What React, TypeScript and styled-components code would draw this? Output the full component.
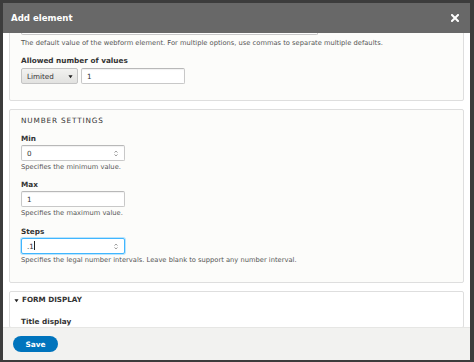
import React from "react";
import styled, { createGlobalStyle } from "styled-components";

const GlobalStyle = createGlobalStyle`
  html, body { margin: 0; padding: 0; }
  body {
    width: 474px;
    height: 362px;
    overflow: hidden;
    background: #3a3a3a;
    font-family: "DejaVu Sans", "Liberation Sans", sans-serif;
    color: #333;
  }
  * { box-sizing: border-box; }
`;

const Page = styled.div`
  width: 474px;
  height: 362px;
  display: flex;
  flex-direction: column;
  padding: 3px 4px 2px 3px;
  background: #3c3c3c;
`;

const Dialog = styled.div`
  flex: 1;
  min-height: 0;
  display: flex;
  flex-direction: column;
  background: #fff;
  overflow: hidden;
`;

const TitleBar = styled.div`
  flex: none;
  height: 30px;
  background: #686868;
  display: flex;
  align-items: center;
  justify-content: space-between;
  padding: 0 11px 0 8px;
  color: #fff;
  font-weight: bold;
  font-size: 8.6px;
`;

const Body = styled.div`
  flex: 1;
  min-height: 0;
  overflow: hidden;
  padding: 0 6px;
`;

const Scroller = styled.div`
  margin-top: -22px;
  display: flex;
  flex-direction: column;
  gap: 8px;
`;

const Fieldset = styled.div<{ $plain?: boolean }>`
  border: 1px solid #dedede;
  border-radius: 2px;
  background: ${(p) => (p.$plain ? "#ffffff" : "#fcfcfa")};
  padding: ${(p) => (p.$plain ? "3px 11px 0 4px" : "6px 11px 16px 11px")};
  display: flex;
  flex-direction: column;
  align-items: flex-start;
`;

const Legend = styled.div`
  font-size: 7.3px;
  line-height: 10px;
  letter-spacing: 0.85px;
  text-transform: uppercase;
  color: #333;
`;

const Summary = styled.div`
  display: flex;
  align-items: center;
  gap: 3px;
  font-size: 7.2px;
  line-height: 10px;
  font-weight: bold;
  text-transform: uppercase;
  color: #333;
`;

const Label = styled.div<{ $gap?: number }>`
  margin-top: ${(p) => p.$gap ?? 8}px;
  font-size: 7.3px;
  line-height: 10px;
  font-weight: bold;
  color: #333;
`;

const Desc = styled.div<{ $gap?: number }>`
  margin-top: ${(p) => p.$gap ?? 1}px;
  font-size: 6.72px;
  line-height: 11px;
  color: #555;
  white-space: nowrap;
`;

const TextInput = styled.div<{ $w: number; $focus?: boolean }>`
  margin-top: 1px;
  width: ${(p) => p.$w}px;
  height: 16px;
  border: 1px solid ${(p) => (p.$focus ? "#40b6ff" : "#c8c8c8")};
  border-top-color: ${(p) => (p.$focus ? "#40b6ff" : "#b8b8b8")};
  border-radius: 2px;
  background: #fff;
  box-shadow: ${(p) =>
    p.$focus ? "0 0 0 1px rgba(64,182,255,0.35)" : "inset 0 1px 1px rgba(0,0,0,0.06)"};
  display: flex;
  align-items: center;
  justify-content: space-between;
  padding: 0 6px 0 5px;
  font-size: 7.2px;
  color: #333;
`;

const TopInput = styled(TextInput)`
  margin-top: 0;
  height: 17px;
`;

const Row = styled.div`
  margin-top: 2px;
  display: flex;
  gap: 3px;
`;

const Select = styled.div`
  width: 57px;
  height: 16px;
  border: 1px solid #c4c4c4;
  border-radius: 2px;
  background: linear-gradient(#f2f2f0, #e2e2e0);
  display: flex;
  align-items: center;
  justify-content: space-between;
  padding: 0 4px 0 5px;
  font-size: 7.2px;
  color: #333;
`;

const Caret = styled.span`
  display: inline-block;
  width: 0.6px;
  height: 9px;
  background: #222;
  margin-left: 0.5px;
  vertical-align: -1.5px;
`;

const Footer = styled.div`
  flex: none;
  height: 33px;
  background: #f2f2f0;
  border-top: 1px solid #e6e6e4;
  display: flex;
  align-items: center;
  padding: 0 10px;
`;

const SaveButton = styled.button`
  width: 45px;
  height: 16px;
  border: none;
  border-radius: 9px;
  background: #0074bd;
  color: #fff;
  font-family: "DejaVu Sans", sans-serif;
  font-weight: bold;
  font-size: 7.4px;
  padding: 0;
  display: flex;
  align-items: center;
  justify-content: center;
`;

const Spinner = () => (
  <svg width="4" height="7" viewBox="0 0 4 7">
    <path d="M0.5 2.6 L2 1 L3.5 2.6" fill="none" stroke="#888" strokeWidth="0.8" />
    <path d="M0.5 4.4 L2 6 L3.5 4.4" fill="none" stroke="#888" strokeWidth="0.8" />
  </svg>
);

const DownTriangle = ({ size = 6 }: { size?: number }) => (
  <svg width={size} height={size} viewBox="0 0 6 6">
    <path d="M0.5 1.5 L5.5 1.5 L3 5 Z" fill="#222" />
  </svg>
);

const CloseIcon = () => (
  <svg width="8" height="8" viewBox="0 0 8 8">
    <path d="M1 1 L7 7 M7 1 L1 7" stroke="#fff" strokeWidth="2" strokeLinecap="square" />
  </svg>
);

export default function App() {
  return (
    <>
      <GlobalStyle />
      <Page>
        <Dialog>
          <TitleBar>
            <span>Add element</span>
            <CloseIcon />
          </TitleBar>
          <Body>
            <Scroller>
              <Fieldset>
                <TopInput $w={297} />
                <Desc $gap={3}>
                  The default value of the webform element. For multiple options, use commas to
                  separate multiple defaults.
                </Desc>
                <Label $gap={7}>Allowed number of values</Label>
                <Row>
                  <Select>
                    <span>Limited</span>
                    <DownTriangle size={5} />
                  </Select>
                  <TextInput $w={104} style={{ marginTop: 0 }}>
                    <span>1</span>
                  </TextInput>
                </Row>
              </Fieldset>

              <Fieldset>
                <Legend>Number settings</Legend>
                <Label>Min</Label>
                <TextInput $w={104}>
                  <span>0</span>
                  <Spinner />
                </TextInput>
                <Desc>Specifies the minimum value.</Desc>
                <Label $gap={7}>Max</Label>
                <TextInput $w={104}>
                  <span>1</span>
                </TextInput>
                <Desc>Specifies the maximum value.</Desc>
                <Label>Steps</Label>
                <TextInput $w={104} $focus>
                  <span>
                    .1
                    <Caret />
                  </span>
                  <Spinner />
                </TextInput>
                <Desc>
                  Specifies the legal number intervals. Leave blank to support any number interval.
                </Desc>
              </Fieldset>

              <Fieldset $plain>
                <Summary>
                  <DownTriangle size={5} />
                  <span>Form display</span>
                </Summary>
                <Label $gap={12} style={{ marginLeft: 7 }}>
                  Title display
                </Label>
              </Fieldset>
            </Scroller>
          </Body>
          <Footer>
            <SaveButton>Save</SaveButton>
          </Footer>
        </Dialog>
      </Page>
    </>
  );
}
